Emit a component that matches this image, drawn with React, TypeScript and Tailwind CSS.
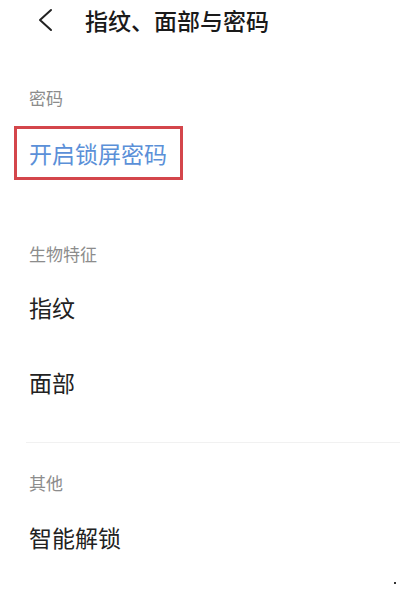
import React from 'react';

const font = { fontFamily: '"Noto Sans CJK SC", "Noto Sans", sans-serif' };

function SectionLabel({ text, className = '' }: { text: string; className?: string }) {
  return (
    <div className={`h-[20px] pl-[29px] flex items-center text-[17px] text-[#8c8c8c] ${className}`}>
      {text}
    </div>
  );
}

function Row({ text }: { text: string }) {
  return <div className="h-[75px] pl-[29px] flex items-center text-[23px] text-[#222222]">{text}</div>;
}

export default function App() {
  return (
    <div className="w-[400px] h-[589px] bg-white overflow-hidden relative" style={font}>
      {/* header */}
      <div className="h-[40px] flex items-center">
        <svg className="ml-[36px]" width="18" height="24" viewBox="0 0 18 24" fill="none">
          <path d="M15 2 L4 12 L15 22" stroke="#222" strokeWidth="2" strokeLinecap="round" strokeLinejoin="round" />
        </svg>
        <div className="ml-[31px] text-[23px] font-medium text-[#1a1a1a]">指纹、面部与密码</div>
      </div>

      <SectionLabel text="密码" className="mt-[48px]" />
      <div className="mt-[18px] ml-[14px] w-[169px] h-[54px] border-[3px] border-[#d4464b] flex items-center pl-[12px] text-[23px] text-[#5b90d8]">
        开启锁屏密码
      </div>

      <SectionLabel text="生物特征" className="mt-[64px]" />
      <div className="mt-[6px]">
        <Row text="指纹" />
        <Row text="面部" />
      </div>

      <div className="mt-[22px] ml-[26px] h-px bg-[#f1f1f1]" />

      <SectionLabel text="其他" className="mt-[30px]" />
      <div className="mt-[7px]">
        <Row text="智能解锁" />
      </div>

      <div className="absolute right-[4px] bottom-[5px] w-[2px] h-[2px] bg-[#333]" />
    </div>
  );
}
